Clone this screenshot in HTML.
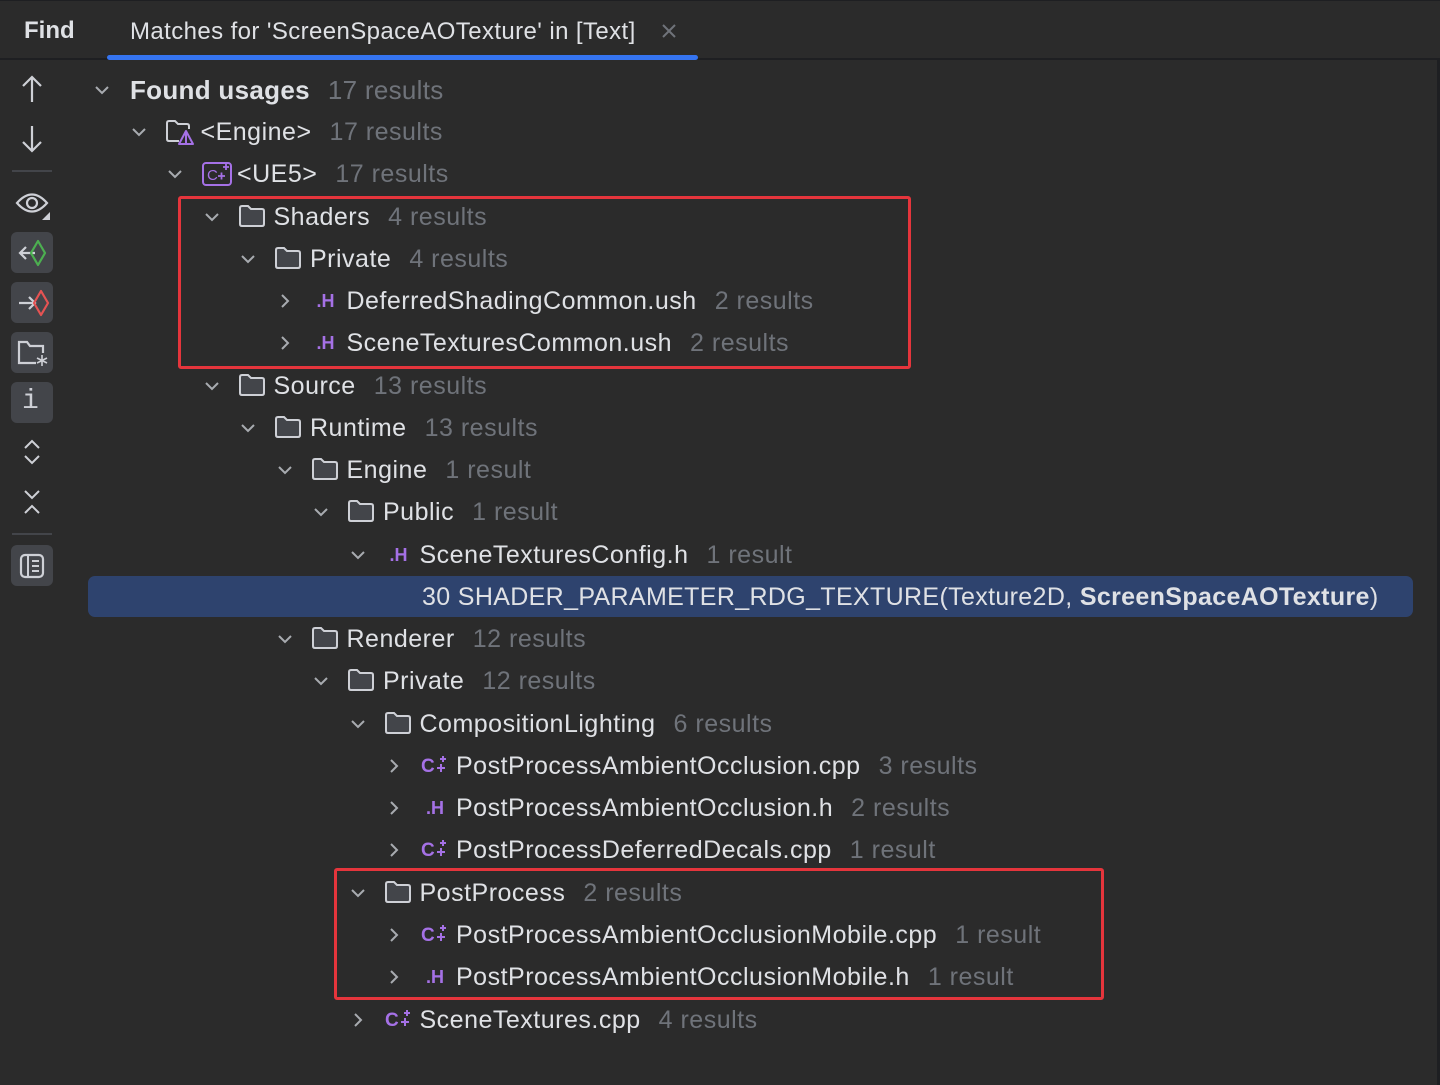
<!DOCTYPE html>
<html><head><meta charset="utf-8"><style>
*{margin:0;padding:0;box-sizing:border-box}
body{width:1440px;height:1085px;background:#2b2b2b;font-family:"Liberation Sans",sans-serif;color:#dfe1e5;position:relative;overflow:hidden}
.hdr{position:absolute;left:0;top:0;width:1440px;height:60px;border-bottom:2px solid #1e1f22;border-top:1px solid #1e1f22}
.find{position:absolute;left:24px;top:17px;font-size:24px;font-weight:bold;color:#dfe1e5}
.tab{position:absolute;left:130px;top:18px;font-size:24px;color:#dfe1e5;letter-spacing:0.4px}
.x{position:absolute;left:660px;top:22px}
.ul{position:absolute;left:107px;top:55px;width:591px;height:5px;background:#3574f0;border-radius:3px}
.rb{position:absolute;right:0;top:60px;width:3px;height:1025px;background:#1e1f22}
.row{position:absolute;height:42px;line-height:42px;font-size:25px;white-space:nowrap;letter-spacing:0.5px}
.row .c{color:#6f737a;margin-left:18px}
.chev{position:absolute}
.ic{position:absolute}
.sel{position:absolute;left:88px;top:576px;width:1325px;height:41px;background:#2e436e;border-radius:7px}
.red{position:absolute;border:3px solid #e5353c;border-radius:3px}
.btn{position:absolute;left:11px;width:42px;height:41px;background:#43454a;border-radius:6px}
.sep{position:absolute;left:12px;width:40px;height:2px;background:#43454a}
.h{color:#a571e6;font-weight:bold;font-size:18px;letter-spacing:0}
</style></head><body>
<div class="hdr"></div>
<div class="find">Find</div>
<div class="tab">Matches for 'ScreenSpaceAOTexture' in [Text]</div>
<svg class="x" width="18" height="18" viewBox="0 0 18 18"><path d="M3 3L15 15M15 3L3 15" stroke="#6f737a" stroke-width="2"/></svg>
<div class="ul"></div>
<div class="rb"></div>

<svg style="position:absolute;left:18px;top:74px" width="28" height="30" viewBox="0 0 28 30"><path d="M14 28V3M5 12L14 3L23 12" stroke="#ced0d6" stroke-width="2.2" fill="none"/></svg>
<svg style="position:absolute;left:18px;top:124px" width="28" height="30" viewBox="0 0 28 30"><path d="M14 2V27M5 18L14 27L23 18" stroke="#ced0d6" stroke-width="2.2" fill="none"/></svg>
<div class="sep" style="top:170px"></div>
<svg style="position:absolute;left:14px;top:188px" width="38" height="34" viewBox="0 0 38 34"><path d="M3 15Q18 -2 33 15Q18 32 3 15Z" stroke="#ced0d6" stroke-width="2.2" fill="none"/><circle cx="18" cy="15" r="5" stroke="#ced0d6" stroke-width="2.2" fill="none"/><path d="M36 24V32H28Z" fill="#ced0d6"/></svg>
<div class="btn" style="top:232px"></div>
<svg style="position:absolute;left:16px;top:238px" width="34" height="30" viewBox="0 0 34 30"><path d="M19 15H4M10 9L4 15L10 21" stroke="#ced0d6" stroke-width="2.2" fill="none"/><path d="M22 3L29 15L22 27L15 15Z" stroke="#4caf50" stroke-width="2.2" fill="none" stroke-linejoin="round"/></svg>
<div class="btn" style="top:282px"></div>
<svg style="position:absolute;left:16px;top:288px" width="34" height="30" viewBox="0 0 34 30"><path d="M3 15H19M13 9L19 15L13 21" stroke="#ced0d6" stroke-width="2.2" fill="none"/><path d="M25 3L32 15L25 27L18 15Z" stroke="#e55353" stroke-width="2.2" fill="none" stroke-linejoin="round"/></svg>
<div class="btn" style="top:332px"></div>
<svg style="position:absolute;left:16px;top:338px" width="34" height="30" viewBox="0 0 34 30"><path d="M20 25H3V4H11L14 8H27V15" stroke="#ced0d6" stroke-width="2.2" fill="none"/><path d="M26 17V28M21 20L31 25M31 20L21 25" stroke="#ced0d6" stroke-width="1.6"/></svg>
<div class="btn" style="top:382px"></div>
<div style="position:absolute;left:22px;top:386px;font-size:28px;color:#ced0d6;font-family:'Liberation Mono',monospace">i</div>
<svg style="position:absolute;left:20px;top:438px" width="24" height="28" viewBox="0 0 24 28"><path d="M5 10L12 3L19 10M5 18L12 25L19 18" stroke="#ced0d6" stroke-width="2" fill="none"/></svg>
<svg style="position:absolute;left:20px;top:488px" width="24" height="28" viewBox="0 0 24 28"><path d="M5 3L12 10L19 3M5 25L12 18L19 25" stroke="#ced0d6" stroke-width="2" fill="none"/></svg>
<div class="sep" style="top:533px"></div>
<div class="btn" style="top:545px"></div>
<svg style="position:absolute;left:19px;top:553px" width="26" height="26" viewBox="0 0 26 26"><rect x="2" y="2" width="22" height="22" rx="4" stroke="#ced0d6" stroke-width="2.2" fill="none"/><path d="M9 2V24M13 8H20M13 13H20M13 18H20" stroke="#ced0d6" stroke-width="2"/></svg>

<div class="sel"></div>
<div class="red" style="left:178px;top:196px;width:733px;height:173px"></div>
<div class="red" style="left:334px;top:868px;width:770px;height:132px"></div>

<div id="tree"></div>
<script>
const F='<svg width="28" height="24" viewBox="0 0 28 24"><path d="M2 4Q2 2 4 2H10L13 5H24Q26 5 26 7V20Q26 22 24 22H4Q2 22 2 20Z" fill="#43454a" stroke="#ced0d6" stroke-width="2"/></svg>';
const H='<span class="h">.H</span>';
const C='<svg width="28" height="24" viewBox="0 0 28 24"><text x="1" y="19" font-family="Liberation Sans" font-weight="bold" font-size="19" fill="#a571e6">C</text><path d="M17 15H25M21 11V19M20 6H26M23 3V9" stroke="#a571e6" stroke-width="2"/></svg>';
const ENG='<svg width="30" height="28" viewBox="0 0 30 28"><path d="M2 4Q2 2 4 2H10L13 5H22Q24 5 24 7V10M14 22H4Q2 22 2 20V4" fill="none" stroke="#ced0d6" stroke-width="2"/><path d="M21 12L28 25H14Z M21 12V25" fill="none" stroke="#a571e6" stroke-width="2" stroke-linejoin="round"/></svg>';
const UE='<svg width="32" height="26" viewBox="0 0 32 26"><rect x="2" y="2" width="28" height="22" rx="3" fill="none" stroke="#a571e6" stroke-width="2"/><text x="6" y="19" font-family="Liberation Sans" font-size="15" fill="#a571e6">C</text><path d="M17 15H24M20.5 11.5V18.5M22 6H28M25 3V9" stroke="#a571e6" stroke-width="1.8"/></svg>';
const rows=[
[90,0,1,null,'<b>Found usages</b>','17 results'],
[132,1,1,ENG,'&lt;Engine&gt;','17 results'],
[174,2,1,UE,'&lt;UE5&gt;','17 results'],
[217,3,1,F,'Shaders','4 results'],
[259,4,1,F,'Private','4 results'],
[301,5,0,H,'DeferredShadingCommon.ush','2 results'],
[343,5,0,H,'SceneTexturesCommon.ush','2 results'],
[386,3,1,F,'Source','13 results'],
[428,4,1,F,'Runtime','13 results'],
[470,5,1,F,'Engine','1 result'],
[512,6,1,F,'Public','1 result'],
[555,7,1,H,'SceneTexturesConfig.h','1 result'],
[639,5,1,F,'Renderer','12 results'],
[681,6,1,F,'Private','12 results'],
[724,7,1,F,'CompositionLighting','6 results'],
[766,8,0,C,'PostProcessAmbientOcclusion.cpp','3 results'],
[808,8,0,H,'PostProcessAmbientOcclusion.h','2 results'],
[850,8,0,C,'PostProcessDeferredDecals.cpp','1 result'],
[893,7,1,F,'PostProcess','2 results'],
[935,8,0,C,'PostProcessAmbientOcclusionMobile.cpp','1 result'],
[977,8,0,H,'PostProcessAmbientOcclusionMobile.h','1 result'],
[1020,7,0,C,'SceneTextures.cpp','4 results']];
let h='';
for(const [y,l,o,ic,t,c] of rows){
 const cx=102+36.5*l;
 const chev=o?'<path d="M3 6L9 12L15 6" stroke="#a8abb0" stroke-width="2" fill="none"/>':'<path d="M6 3L12 9L6 15" stroke="#a8abb0" stroke-width="2" fill="none"/>';
 h+=`<svg class="chev" style="left:${cx-9}px;top:${y-9}px" width="18" height="18" viewBox="0 0 18 18">${chev}</svg>`;
 const tx=ic?cx+62:cx+28;
 if(ic){const off=ic===H?6:0;h+=`<div class="ic" style="left:${cx+26+off}px;top:${y-(ic===H?12:13)}px;line-height:24px">${ic}</div>`;}
 h+=`<div class="row" style="left:${tx}px;top:${y-21}px${l==0?';font-size:26px;letter-spacing:0.3px':''}">${t}<span class="c">${c}</span></div>`;
}
h+=`<div class="row" style="left:422px;top:576px;letter-spacing:0.35px">30 SHADER_PARAMETER_RDG_TEXTURE(Texture2D, <b>ScreenSpaceAOTexture</b>)</div>`;
document.getElementById('tree').innerHTML=h;
</script>
</body></html>
